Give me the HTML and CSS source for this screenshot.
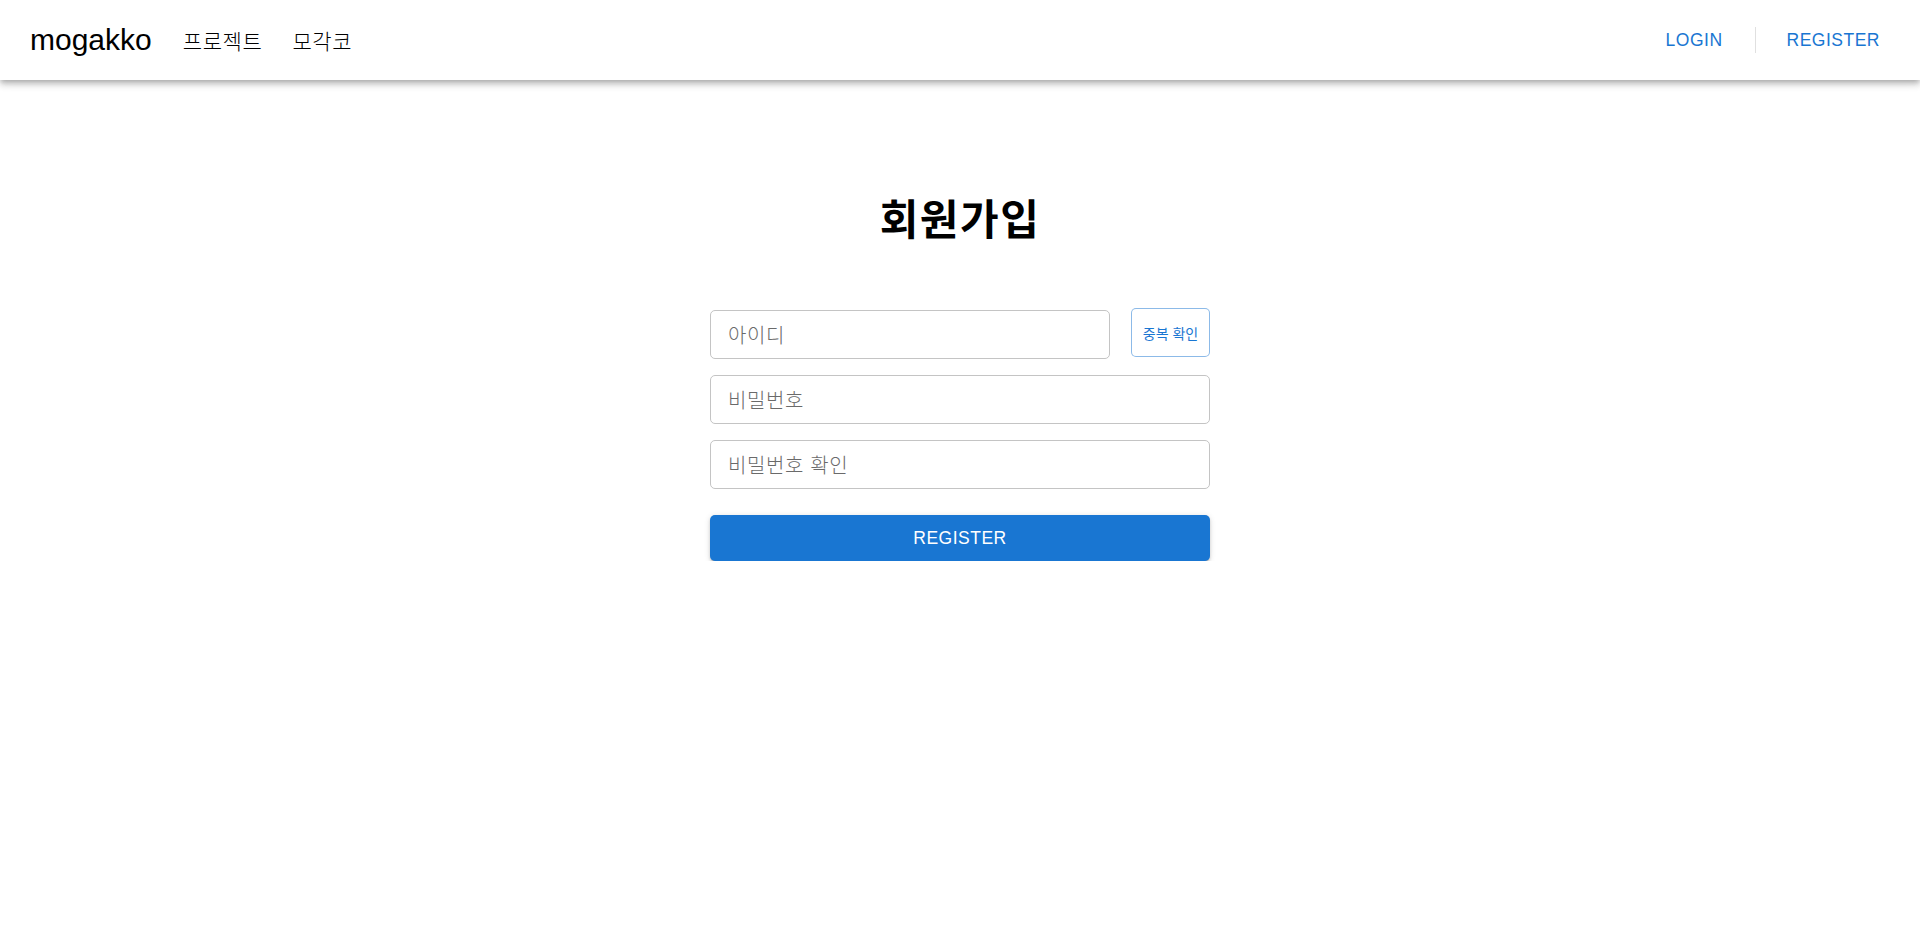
FILE: index.html
```html
<!DOCTYPE html>
<html lang="ko">
<head>
  <meta charset="UTF-8" />
  <meta name="viewport" content="width=device-width, initial-scale=1.0">
  <title>mogakko - 회원가입</title>
  <link rel="stylesheet" href="styles.css">
</head>
<body>

  <!-- 상단 바 -->
  <header class="app-bar">
    <a class="logo" href="#">mogakko</a>
    <nav class="main-nav">
      <a href="#">프로젝트</a>
      <a href="#">모각코</a>
    </nav>
    <div class="auth-links">
      <a class="text-button" href="#">LOGIN</a>
      <span class="divider"></span>
      <a class="text-button" href="#">REGISTER</a>
    </div>
  </header>

  <main class="page">
    <h1>회원가입</h1>

    <form class="register-form" onsubmit="return false">
      <div class="id-row">
        <input class="field" type="text" placeholder="아이디">
        <button type="button" class="check-button">중복 확인</button>
      </div>
      <input class="field" type="password" placeholder="비밀번호">
      <input class="field" type="password" placeholder="비밀번호 확인">
      <button type="submit" class="submit-button">REGISTER</button>
    </form>
  </main>

</body>
</html>
```

FILE: styles.css
```css
body {
  margin: 0;
  background: #fff;
  font-family: "Liberation Sans", "Noto Sans CJK KR", sans-serif;
  color: #000;
}

a {
  text-decoration: none;
  color: inherit;
}

/* 상단 바 */
.app-bar {
  height: 80px;
  display: flex;
  align-items: center;
  padding: 0 30px;
  background: #fff;
  box-shadow: 0 2px 5px -1px rgba(0, 0, 0, 0.2),
              0 5px 6px 0 rgba(0, 0, 0, 0.14),
              0 1px 12px 0 rgba(0, 0, 0, 0.12);
}

.logo {
  font-size: 30px;
  line-height: 36px;
}

.main-nav {
  display: flex;
  gap: 30px;
  margin-left: 31px;
}

.main-nav a {
  font-size: 21px;
  letter-spacing: 0.6px;
  line-height: 28px;
  font-family: "Noto Sans CJK KR", sans-serif;
  font-weight: 300;
}

.auth-links {
  margin-left: auto;
  display: flex;
  align-items: center;
}

.text-button {
  color: #1976d2;
  font-size: 17.5px;
  letter-spacing: 0.5px;
  line-height: 24px;
  padding: 8px 10px;
}

.divider {
  width: 1px;
  height: 26px;
  background: #e0e0e0;
  margin: 0 21px 0 22px;
}

/* 회원가입 폼 */
.page {
  padding-top: 113px;
  display: flex;
  flex-direction: column;
  align-items: center;
}

h1 {
  margin: 0 0 67px;
  font-size: 42px;
  letter-spacing: 1.5px;
  line-height: 48px;
  font-weight: 700;
  font-family: "Noto Sans CJK KR", sans-serif;
}

.register-form {
  width: 500px;
  display: flex;
  flex-direction: column;
  gap: 16px;
}

.id-row {
  display: flex;
  align-items: flex-start;
  gap: 21px;
}

.id-row .field {
  flex: 1;
  margin-top: 2px;
}

.field {
  box-sizing: border-box;
  height: 49px;
  padding: 0 17px;
  border: 1px solid #c4c4c4;
  border-radius: 5px;
  font-size: 20px;
  letter-spacing: 0.6px;
  font-family: "Noto Sans CJK KR", sans-serif;
  font-weight: 300;
  color: #222;
  outline: none;
  background: #fff;
}

.field::placeholder {
  color: #6a6a6a;
}

.check-button {
  box-sizing: border-box;
  width: 79px;
  height: 49px;
  padding: 0;
  border: 1px solid rgba(25, 118, 210, 0.5);
  border-radius: 5px;
  background: #fff;
  color: #1976d2;
  font-size: 14px;
  font-family: "Noto Sans CJK KR", sans-serif;
  cursor: pointer;
}

.submit-button {
  margin-top: 10px;
  height: 46px;
  border: none;
  border-radius: 5px;
  background: #1976d2;
  color: #fff;
  font-size: 17.5px;
  letter-spacing: 0.5px;
  font-family: "Liberation Sans", sans-serif;
  cursor: pointer;
  box-shadow: 0 4px 2px -2px rgba(0, 0, 0, 0.2),
              0 2px 3px 0 rgba(0, 0, 0, 0.14),
              0 1px 6px 0 rgba(0, 0, 0, 0.12);
}
```
